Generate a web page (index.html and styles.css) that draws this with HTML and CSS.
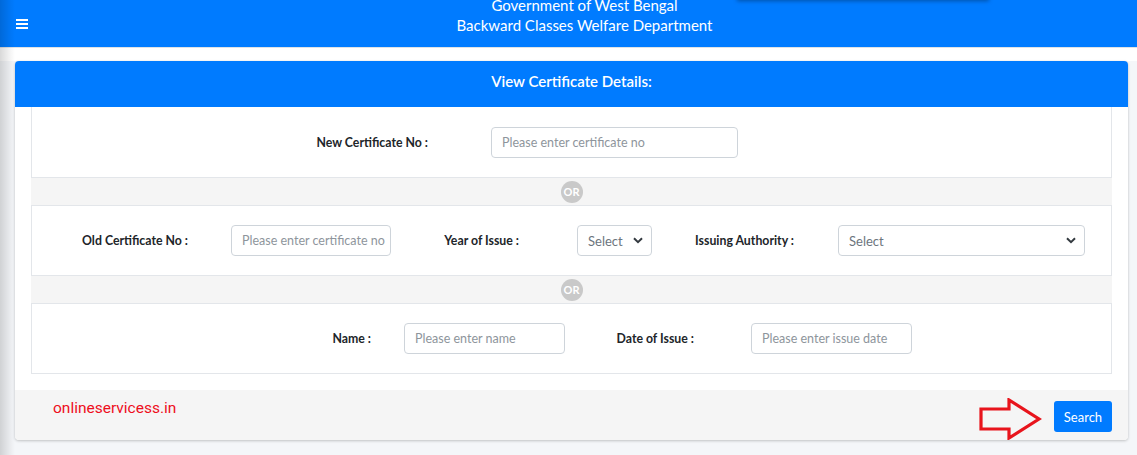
FILE: index.html
```html
<!DOCTYPE html>
<html lang="en">
<head>
    <meta charset="UTF-8"/>
    <meta name="viewport" content="width=device-width, initial-scale=1"/>
    <title>View Certificate Details</title>
    <link rel="stylesheet" href="styles.css">
</head>
<body>

<!-- Top bar -->
<header class="topbar">
    <span class="menu-btn">
        <svg width="12" height="10" viewBox="0 0 12 10">
            <rect x="0" y="0" width="12" height="2" fill="#fff"/>
            <rect x="0" y="4" width="12" height="2" fill="#fff"/>
            <rect x="0" y="8" width="12" height="2" fill="#fff"/>
        </svg>
    </span>
    <div class="title">
        <div>Government of West Bengal</div>
        <div>Backward Classes Welfare Department</div>
    </div>
    <span class="drop-shadow"></span>
</header>

<div class="content-wrapper">
    <div class="content-header"></div>

    <section class="content">
        <div class="card">
            <div class="card-header">View Certificate Details:</div>

            <div class="card-body">
                <div class="box row-new">
                    <label class="lbl">New Certificate No :</label>
                    <input type="text" class="field" placeholder="Please enter certificate no">
                </div>

                <div class="divider"><span class="or">OR</span></div>

                <div class="box row-old">
                    <label class="lbl">Old Certificate No :</label>
                    <input type="text" class="field" placeholder="Please enter certificate no">
                    <label class="lbl">Year of Issue :</label>
                    <div class="select-wrap year">
                        <select class="field"><option>Select</option></select>
                        <svg class="chev" width="10" height="7" viewBox="0 0 10 7"><path d="M1 1.2 L5 5.2 L9 1.2" fill="none" stroke="#343a40" stroke-width="2"/></svg>
                    </div>
                    <label class="lbl">Issuing Authority :</label>
                    <div class="select-wrap authority">
                        <select class="field"><option>Select</option></select>
                        <svg class="chev" width="10" height="7" viewBox="0 0 10 7"><path d="M1 1.2 L5 5.2 L9 1.2" fill="none" stroke="#343a40" stroke-width="2"/></svg>
                    </div>
                </div>

                <div class="divider"><span class="or">OR</span></div>

                <div class="box row-name">
                    <label class="lbl">Name :</label>
                    <input type="text" class="field" placeholder="Please enter name">
                    <label class="lbl">Date of Issue :</label>
                    <input type="text" class="field" placeholder="Please enter issue date">
                </div>
            </div>

            <div class="card-footer">
                <span class="watermark">onlineservicess.in</span>
                <div class="actions">
                    <svg class="arrow" width="64" height="42" viewBox="0 0 64 42">
                        <polygon points="2,11 30,11 30,2 60,21 30,40 30,31 2,31" fill="none" stroke="#e8141c" stroke-width="3.2" stroke-linejoin="miter"/>
                    </svg>
                    <button class="btn-search">Search</button>
                </div>
            </div>
        </div>
    </section>
</div>

</body>
</html>
```

FILE: styles.css
```css
body {
    margin: 0;
    font-family: "Source Sans Pro", Lato, "Liberation Sans", sans-serif;
    background-color: #f4f6f9;
    overflow: hidden;
    position: relative;
    height: 455px;
}

/* sidebar shadow on the left edge */
body::before {
    content: "";
    position: absolute;
    top: 0;
    left: 0;
    width: 15px;
    height: 100%;
    background: linear-gradient(to right, rgba(0, 0, 0, 0.15), rgba(0, 0, 0, 0.04) 70%, rgba(0, 0, 0, 0));
    z-index: 5;
}

.topbar {
    display: flex;
    height: 47px;
    background-color: #007bff;
    border-bottom: 1px solid #dee2e6;
    color: #fff;
    position: relative;
}

.menu-btn {
    width: 44px;
    flex: none;
    padding: 13px 0 0 16px;
    box-sizing: border-box;
}

.title {
    flex: 1;
    text-align: center;
    font-size: 15px;
    line-height: 20px;
    margin-top: -5px;
    padding-right: 12px;
}

.drop-shadow {
    position: absolute;
    top: -6px;
    left: 737px;
    width: 252px;
    height: 6px;
    box-shadow: 0 1px 4px rgba(0, 0, 0, 0.35);
}

.content-header {
    height: 13px;
    background-color: #fff;
}

.content {
    padding: 0 9px 0 15px;
}

.card {
    background-color: #fff;
    border-radius: 4px;
    box-shadow: 0 0 1px rgba(0, 0, 0, 0.125), 0 1px 3px rgba(0, 0, 0, 0.2);
    overflow: hidden;
}

.card-header {
    height: 46px;
    background-color: #007bff;
    color: #fff;
    text-align: center;
    font-size: 15px;
    font-weight: 600;
    line-height: 40px;
}

.card-body {
    padding: 0 16px 16px 16px;
}

.box {
    display: flex;
    align-items: center;
    height: 69px;
    border: 1px solid #e3e6ea;
}

.row-new {
    border-top: none;
    height: 70px;
}

.divider {
    height: 27px;
    background-color: #f5f5f5;
    display: flex;
    justify-content: center;
    align-items: center;
}

.or {
    width: 22px;
    height: 22px;
    border-radius: 50%;
    background-color: #c9c9c9;
    color: #fff;
    font-size: 11px;
    font-weight: 700;
    line-height: 22px;
    text-align: center;
}

.lbl {
    font-size: 12.3px;
    font-weight: 700;
    color: #212529;
    text-align: right;
    flex: none;
}

.field {
    height: 31px;
    box-sizing: border-box;
    border: 1px solid #ced4da;
    border-radius: 4px;
    padding: 0 4px 0 10px;
    font-family: inherit;
    font-size: 12.5px;
    color: #6c757d;
    background-color: #fff;
    flex: none;
}

.field::placeholder {
    color: #8e959c;
}

select.field {
    appearance: none;
    -webkit-appearance: none;
    width: 100%;
    padding: 0 10px;
    font-size: 13px;
}

.select-wrap {
    position: relative;
    flex: none;
}

.chev {
    position: absolute;
    right: 9px;
    top: 12px;
    pointer-events: none;
}

/* row 1 */
.row-new .lbl {
    width: 396px;
}

.row-new .field {
    width: 247px;
    margin-left: 63px;
}

/* row 2 */
.row-old .lbl:nth-of-type(1) {
    width: 156px;
}

.row-old > .field {
    width: 160px;
    margin-left: 43px;
}

.row-old .lbl:nth-of-type(2) {
    width: 128px;
}

.row-old .lbl:nth-of-type(3) {
    width: 142px;
}

.year {
    width: 75px;
    margin-left: 58px;
}

.authority {
    width: 247px;
    margin-left: 44px;
}

/* row 3 */
.row-name .lbl:nth-of-type(1) {
    width: 339px;
}

.row-name .field {
    width: 161px;
    margin-left: 33px;
}

.row-name .lbl:nth-of-type(2) {
    width: 129px;
}

.row-name .field:last-child {
    margin-left: 57px;
}

.card-footer {
    display: flex;
    justify-content: space-between;
    align-items: flex-start;
    height: 50px;
    background-color: #f5f5f5;
    padding: 0 16px 0 38px;
}

.watermark {
    color: #ee0e1c;
    font-family: Roboto, "Liberation Sans", Arial, sans-serif;
    font-size: 15.5px;
    margin-top: 9px;
}

.actions {
    display: flex;
    align-items: flex-start;
}

.arrow {
    margin-top: 8px;
    margin-right: 11px;
}

.btn-search {
    margin-top: 11px;
    width: 58px;
    height: 31px;
    background-color: #007bff;
    color: white;
    border: none;
    border-radius: 3px;
    font-family: inherit;
    font-size: 13px;
    cursor: pointer;
}
```
